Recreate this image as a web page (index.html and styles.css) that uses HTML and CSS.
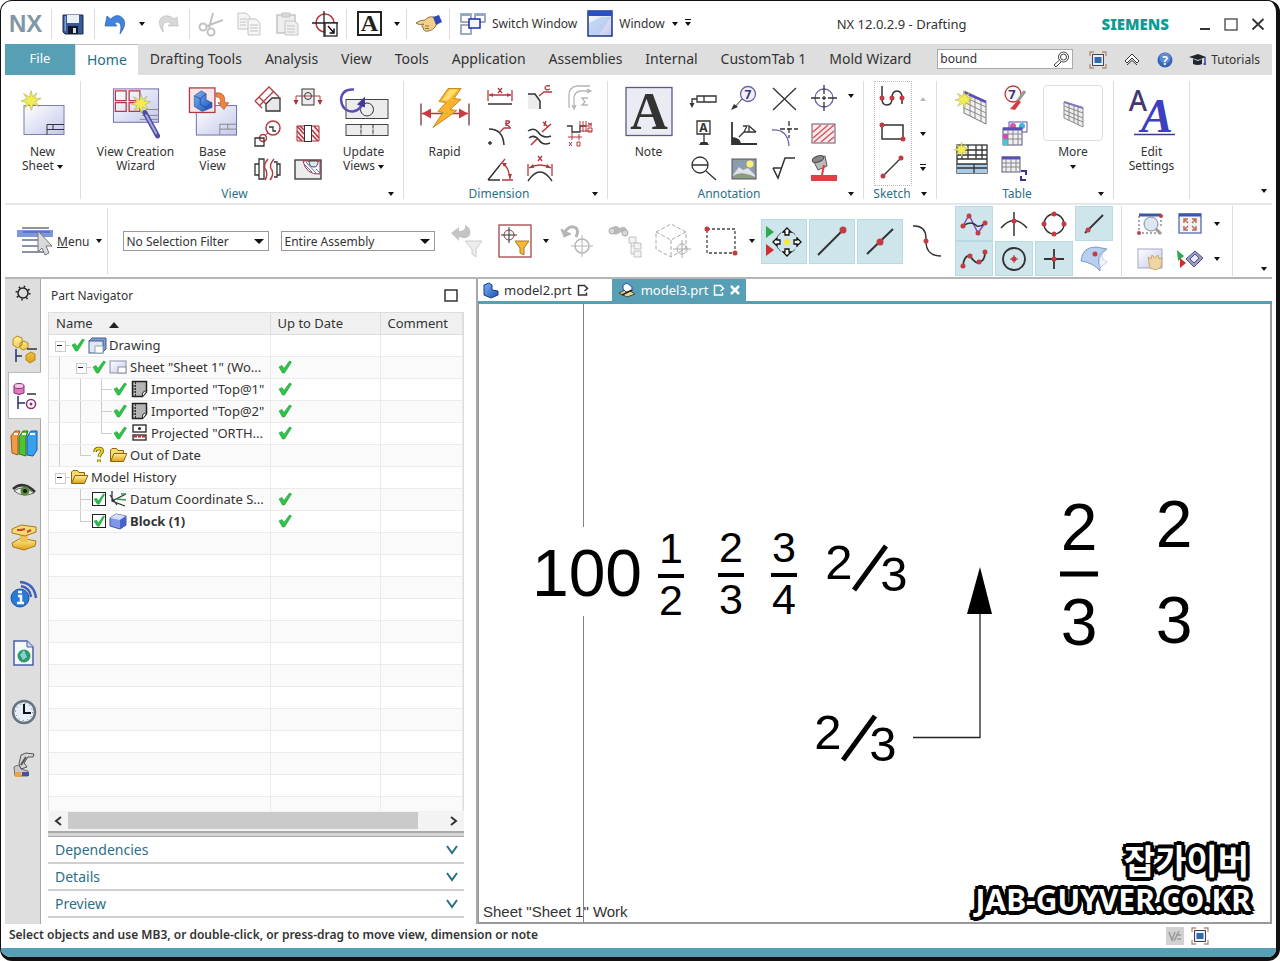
FILE: index.html
```
<!DOCTYPE html>
<html lang="en">
<head>
  <meta charset="UTF-8">
  <meta name="viewport" content="width=device-width, initial-scale=1.0">
  <title>NX 12.0.2.9 - Drafting</title>
  <link rel="stylesheet" href="styles.css">
</head>
<body>
  <!-- Shared symbols -->
  <svg class="defs" width="0" height="0">
    <defs>
      <linearGradient id="paper" x1="0" y1="0" x2="1" y2="1"><stop offset="0" stop-color="#fff"/><stop offset="1" stop-color="#c3c8ea"/></linearGradient>
      <linearGradient id="blue" x1="0" y1="0" x2="1" y2="1"><stop offset="0" stop-color="#7db4f2"/><stop offset="1" stop-color="#1c4fb8"/></linearGradient>
      <linearGradient id="gold" x1="0" y1="0" x2="0" y2="1"><stop offset="0" stop-color="#fff0a0"/><stop offset="1" stop-color="#e0a010"/></linearGradient>
      <symbol id="check" viewBox="0 0 14 14"><path d="M1 7 L4 5.500 L6 8.500 L11.500 1 L13.500 2 L6.500 13 L4.500 13 Z" fill="#2fc447" stroke="#1d9a35" stroke-width=".6"/></symbol>
      <symbol id="star" viewBox="0 0 20 20"><path d="M10 0 L11.500 6 L16 2.500 L13.500 7.500 L20 8 L14.500 11 L18 16 L12 13.500 L10.500 20 L8.500 14 L3 17.500 L6 12 L0 10.500 L6 8 L2.500 3 L8.500 6.500 Z" fill="#f2ee52" stroke="#a9aa60" stroke-width=".6"/></symbol>
      <symbol id="folder" viewBox="0 0 18 16"><path d="M1 14 V3 L2.500 1.500 H7 L8.500 3.500 H14 V6" fill="#f8dc70" stroke="#8a6510"/><path d="M1 14.500 L4.500 6.500 H17.300 L14 14.500 Z" fill="url(#gold)" stroke="#8a6510"/></symbol>
      <symbol id="import" viewBox="0 0 18 18"><path d="M2 1.500 H16 V12 L12 16.500 H2 Z" fill="#b4b4b4" stroke="#222" stroke-width="1.500"/><path d="M5 2 V16 M3.500 5 V13" stroke="#333" stroke-dasharray="2 1"/><path d="M16 11 Q11 11 12 16.500" fill="#fff" stroke="#222"/></symbol>
      <symbol id="note" viewBox="0 0 12 12"><path d="M8 1.500 H1.500 V11 H9.500 V8.500 M7 1 L10.500 4.500 L7.500 7" fill="none" stroke="currentColor" stroke-width="1.500"/></symbol>
      <symbol id="fit" viewBox="0 0 18 18"><path d="M1 5 V1 H5 M13 1 H17 V5 M17 13 V17 H13 M5 17 H1 V13" fill="none" stroke="#b08e70" stroke-width="1.300"/><rect x="3.500" y="3.500" width="11" height="11" fill="#eef" stroke="#445"/><rect x="5.500" y="6" width="7" height="6" fill="#2c6cae"/></symbol>
    </defs>
  </svg>

  <div class="window">
    <!-- Title bar -->
    <header class="titlebar">
      <div class="quick logo">NX</div>
      <div class="quick">
        <button class="tool" aria-label="Save"><svg width="22" height="22" viewBox="0 0 22 22"><path d="M1 2 H21 V21 H3 L1 19 Z" fill="#3b5994" stroke="#1c2b55"/><path d="M5 2 H17 V10 H5 Z" fill="#e9eff7"/><path d="M2.500 3 H4 V18 H2.500 Z" fill="#7fa1d8"/><path d="M6 13 H16 V21 H6 Z" fill="#10182f"/><path d="M11 15 H14 V20 H11 Z" fill="#ddd"/></svg></button>
      </div>
      <div class="quick">
        <button class="tool" aria-label="Undo"><svg width="24" height="24" viewBox="0 0 24 24"><path d="M1 14 L3 4 L6.500 7 Q14 0 19.500 7 Q23 13 16 22 Q18 13 15.500 11 Q13.500 9 10.500 11 L13 14 Z" fill="#4184dc" stroke="#2a5fb4" stroke-width=".7"/></svg></button>
        <button class="drop" aria-label="Undo list"><i class="caret"></i></button>
        <button class="tool" aria-label="Redo"><svg width="24" height="24" viewBox="0 0 24 24"><path d="M22 14 L21 5 L18 7 Q11 1 5 6 Q1 11 7 20 Q6 12 9 10.500 Q12 9 15 11 L12 14 Z" fill="#d8d8d8" stroke="#bbb" stroke-width=".7"/></svg></button>
      </div>
      <div class="quick">
        <button class="tool" aria-label="Cut"><svg width="26" height="26" viewBox="0 0 26 26" fill="none" stroke="#c2c2c2" stroke-width="2"><path d="M15 2 L11 17 M25 9 L9 15"/><circle cx="5" cy="16" r="3.500"/><circle cx="13" cy="21" r="3.500"/></svg></button>
        <button class="tool" aria-label="Copy"><svg width="26" height="26" viewBox="0 0 26 26" fill="#f5f5f5" stroke="#c4c4c4"><path d="M2 2 H10 L14 6 V18 H2 Z"/><path d="M12 8 H20 L24 12 V24 H12 Z"/><path d="M4 8 H11 M4 11 H10 M4 14 H10 M14 14 H22 M14 17 H22 M14 20 H22"/></svg></button>
        <button class="tool" aria-label="Paste"><svg width="26" height="26" viewBox="0 0 26 26" fill="#efefef" stroke="#c4c4c4"><path d="M3 4 H21 V22 H3 Z" stroke-width="1.500"/><path d="M8 2 H16 V6 H8 Z" fill="#d8d8d8"/><path d="M11 10 H20 L24 13 V24 H11 Z"/><path d="M13 15 H21 M13 18 H21 M13 21 H21"/></svg></button>
        <button class="tool" aria-label="Move to point"><svg width="28" height="28" viewBox="0 0 28 28" fill="none"><circle cx="14" cy="13" r="9" stroke="#b5383f" stroke-width="1.500"/><path d="M1 13 H27 M13 1 V27" stroke="#222" stroke-width="1.300"/><rect x="14" y="13" width="12" height="13" fill="#fff" stroke="#222" stroke-width="1.300"/><path d="M17 16 L23 23 M23 18.500 V23 H18.500" stroke="#111" stroke-width="1.500"/></svg></button>
      </div>
      <div class="quick">
        <button class="tool letter" aria-label="Note">A</button>
        <button class="drop" aria-label="Note list"><i class="caret"></i></button>
      </div>
      <div class="quick">
        <button class="tool" aria-label="Repeat command"><svg width="27" height="20" viewBox="0 0 27 20"><path d="M1 9 Q5 6 10 6 Q13 2 19 3 L22 10 Q18 17 13 17 Q8 18 8 13 Q5 13 9 10 Q4 12 1 9 Z" fill="#f3cf8b" stroke="#92713c"/><path d="M10 12 H14 M10 14.500 H14" stroke="#92713c"/><path d="M18 3 L24 1 L27 8 L21 11 Z" fill="#2f48b8"/></svg></button>
      </div>
      <button class="window-cmd"><svg width="26" height="22" viewBox="0 0 26 22"><path d="M1 1 H11 V9 H1 Z M15 1 H25 V9 H15 Z M1 12 H11 V21 H1 Z" fill="#fff" stroke="#8291a5" stroke-width="1.500"/><path d="M1 2 H11 M15 2 H25" stroke="#8fa9c8" stroke-width="2"/><rect x="9" y="6" width="11" height="9" fill="#f3f6ff" stroke="#1b2fa8" stroke-width="1.500"/></svg><span>Switch Window</span></button>
      <button class="window-cmd"><svg width="26" height="27" viewBox="0 0 26 27"><rect x="1" y="1" width="24" height="25" fill="url(#paper)" stroke="#1d3585" stroke-width="1.500"/><path d="M2 25 V13 L14 7 H24 L12 25 Z" fill="#a9c7f3" opacity=".6"/><rect x="1" y="1" width="24" height="5" fill="#2b50c2"/></svg><span>Window</span><i class="caret"></i><i class="caret barred"></i></button>
      <span class="title">NX 12.0.2.9 - Drafting</span>
      <span class="brand">SIEMENS</span>
      <div class="controls">
        <button aria-label="Minimize"><svg width="12" height="14"><path d="M1 12 H11" stroke="#333" stroke-width="2"/></svg></button>
        <button aria-label="Maximize"><svg width="14" height="14"><rect x="1" y="2" width="12" height="11" fill="none" stroke="#444" stroke-width="1.300"/></svg></button>
        <button aria-label="Close"><svg width="14" height="14"><path d="M1.500 2 L12.500 12.500 M12.500 2 L1.500 12.500" stroke="#333" stroke-width="1.800"/></svg></button>
      </div>
    </header>

    <!-- Ribbon tabs -->
    <nav class="tabs">
      <a class="file" href="#">File</a>
      <a class="active" href="#">Home</a>
      <a href="#">Drafting Tools</a>
      <a href="#">Analysis</a>
      <a href="#">View</a>
      <a href="#">Tools</a>
      <a href="#">Application</a>
      <a href="#">Assemblies</a>
      <a href="#">Internal</a>
      <a href="#">CustomTab 1</a>
      <a href="#">Mold Wizard</a>
      <div class="search">
        <input type="text" value="bound" aria-label="Find a command">
        <svg width="17" height="17" viewBox="0 0 17 17" fill="none" stroke="#444"><circle cx="10.500" cy="6" r="5"/><circle cx="10.500" cy="6" r="3"/><path d="M6.500 9 L1 14 L3 16 L8.500 10.500"/></svg>
      </div>
      <div class="tab-tools">
        <button aria-label="Full screen"><svg width="18" height="18"><use href="#fit"/></svg></button>
        <button aria-label="Minimize ribbon"><svg width="16" height="13" viewBox="0 0 16 13"><path d="M1 8 L8 1 L15 8 L13 10 L8 5 L3 10 Z" fill="#fff" stroke="#333"/><path d="M3 12 L8 7.500 L13 12" fill="none" stroke="#333"/></svg></button>
        <button aria-label="Help"><svg width="16" height="16" viewBox="0 0 16 16"><circle cx="8" cy="8" r="7.500" fill="#3566b5"/><circle cx="8" cy="6" r="5.500" fill="#5c8bd2"/><text x="8" y="12.500" class="icon-text white" font-size="12">?</text></svg></button>
      </div>
      <a class="tutorials" href="#"><svg width="18" height="14" viewBox="0 0 18 14"><path d="M0 4 L9 1 L17 4 L9 7 Z M4 6 V11 Q9 13 13 11 V6 L9 8 Z" fill="#22252e"/><path d="M16 4 V12 M14.500 11 H17" stroke="#3446b0" stroke-width="1.500"/></svg>Tutorials</a>
    </nav>

    <!-- Ribbon -->
    <section class="ribbon">
      <div class="group">
        <div class="group-body">
          <button class="big">
            <svg width="46" height="52" viewBox="0 0 46 52"><rect x="4" y="21" width="40" height="29" fill="url(#paper)" stroke="#7d7db0"/><path d="M27 40 H44 M27 45 H44 M27 40 V50 M33 40 V45" class="k"/><use href="#star" x="0" y="6" width="22" height="20"/></svg>
            <span>New<br>Sheet <i class="caret"></i></span>
          </button>
        </div>
      </div>

      <div class="group padded">
        <div class="group-body">
          <button class="big wide">
            <svg width="48" height="54" viewBox="0 0 48 54"><rect x="1" y="5" width="46" height="34" fill="url(#paper)" stroke="#6e6ea8"/><path d="M3 7 H14 V17 H3 Z M17 7 H28 V17 H17 Z M3 19 H14 V28 H3 Z M17 19 H28 V28 H17 Z" class="r" stroke-width="1.300"/><path d="M34 26 H47 M30 32 H47 M28 36 H47" class="n"/><path d="M33 29 L46 53" stroke="#4f4f9c" stroke-width="5" stroke-linecap="round"/><path d="M34 31 L45 51" stroke="#a6a6e8" stroke-width="2"/><use href="#star" x="19" y="10" width="20" height="20"/></svg>
            <span>View Creation<br>Wizard</span>
          </button>
          <button class="big">
            <svg width="50" height="54" viewBox="0 0 50 54"><rect x="8" y="22" width="41" height="30" fill="url(#paper)" stroke="#6e6ea8"/><path d="M32 41 H49 M32 46 H49 M32 41 V52 M40 41 V46" class="n"/><rect x="1" y="4" width="26" height="25" fill="#f6e4e6" stroke="#b5383f" stroke-width="1.300"/><path d="M6 12 L13 7 L18 10 V16 L24 19 V24 L14 28 L6 23 Z" fill="url(#blue)" stroke="#204b98" stroke-width=".6"/><path d="M6 12 L12 15 L18 10 M12 15 V21 L18 24 L24 19 M18 24 V26" fill="none" stroke="#1b4596" stroke-width=".8"/><path d="M28 9 Q38 8 37 19 H41 L36 26 L30 19 H33 Q33 13 28 13 Z" fill="#ef843a" stroke="#a5582a" stroke-width=".7"/></svg>
            <span>Base<br>View</span>
          </button>
          <div class="small-grid two">
            <button aria-label="Projected View"><svg width="28" height="28" viewBox="0 0 28 28"><path d="M1 16 L15 2 L25 12 M1 16 L8 23 M5 12 L12 19 M6 20 L19 7" class="r" stroke-width="1.300"/><path d="M12 19 L18 13 H26 V26 H12 Z" fill="#e8e8ec" stroke="#333" stroke-width="1.300"/></svg></button>
            <button aria-label="Section Line"><svg width="28" height="28" viewBox="0 0 28 28"><rect x="8" y="4" width="12" height="16" fill="#ececec" stroke="#333"/><circle cx="14" cy="11" r="3.500" class="k"/><path d="M2 16 V11 H26 V16" class="r"/><path d="M-.5 15 H4.500 L2 20 Z M23.500 15 H28.500 L26 20 Z" fill="#a4303a"/></svg></button>
            <button aria-label="Detail View"><svg width="28" height="28" viewBox="0 0 28 28"><circle cx="19" cy="8" r="7" class="r" stroke-width="1.500"/><circle cx="9" cy="18" r="3.500" class="r" stroke-width="1.500"/><path d="M11 15.500 L14 13" class="r"/><path d="M1 18 H10 V26 H1 Z M15 7 H19 V11 H22" class="k" stroke-width="1.300"/></svg></button>
            <button aria-label="Section View"><svg width="28" height="28" viewBox="0 0 28 28"><path d="M3 6 H25 V21 H3 Z" fill="#fbeaea" stroke="#a4303a"/><path d="M3 6 L10 14 M3 11 L10 19 M3 16 L8 21 M6 6 L10 10 M18 10 L25 18 M18 15 L24 21 M20 6 L25 12" class="r" stroke-width="1.500"/><rect x="10.500" y="5.500" width="7" height="16" fill="#fff" stroke="#333"/></svg></button>
            <button aria-label="View Break"><svg width="28" height="28" viewBox="0 0 28 28"><path d="M1 9 H5 V20 H1 Z M5 4 H10 V24 H5 Z M20 7 H23 V22 H20 M23 9 H26 V20 H23" class="k" stroke-width="1.300"/><path d="M14 4 Q8 11 12 15 Q14 20 11 25 M20 4 Q14 11 18 15 Q20 20 16 25" class="r" stroke-width="1.500"/></svg></button>
            <button aria-label="Break-out Section"><svg width="28" height="28" viewBox="0 0 28 28"><rect x="1" y="5" width="26" height="19" fill="#ececec" stroke="#333" stroke-width="1.300"/><path d="M9 6 Q12 20 26 19 V6 Z" fill="#fff" stroke="#a4303a"/><path d="M10 9 L18 17 M12 7 L22 18 M22 14 L26 18" stroke="#5b6bb8"/><path d="M15 6 Q15 12 20 12 Q24 12 24 6 Z" fill="#dce6f5" stroke="#444"/></svg></button>
          </div>
          <button class="big">
            <svg width="50" height="52" viewBox="0 0 50 52"><rect x="7" y="15" width="42" height="19" fill="#ececec" stroke="#444"/><rect x="7" y="40" width="42" height="11" fill="#ececec" stroke="#444"/><circle cx="28" cy="25" r="6.500" class="k"/><path d="M22 40 V51 M34 40 V51" class="k" stroke-dasharray="4 1"/><path d="M15 5 Q3 4 2 15 Q3 27 14 27 Q21 26 24 18" fill="none" stroke="#5a50b4" stroke-width="2.500"/><path d="M18 20 L26 12 L26 23 Z" fill="#40379c"/></svg>
            <span>Update<br>Views <i class="caret"></i></span>
          </button>
        </div>
        <div class="group-label">View<button class="launcher" aria-label="View options"><i class="caret"></i></button></div>
      </div>

      <div class="group inset">
        <div class="group-body">
          <button class="big">
            <svg width="50" height="50" viewBox="0 0 50 50"><path d="M1 18 V40 M49 18 V40" stroke="#8a5050" stroke-width="1.500"/><path d="M2 28 H48" stroke="#b5383f" stroke-width="1.300"/><path d="M2 28 L11 23 V33 Z M48 28 L39 23 V33 Z" fill="#c93c42"/><path d="M28 3 H41 L34 13 L41 14 L30 24 L37 25 L13 42 L23 27 L18 26 L26 17 L19 16 Z" fill="#fbb32d" stroke="#c58a22"/><path d="M30 4 H38 L28 15 L22 15 Z" fill="#ffe06e"/></svg>
            <span>Rapid</span>
          </button>
          <div class="small-grid three">
            <button aria-label="Linear"><svg width="28" height="28" viewBox="0 0 28 28"><path d="M2 5 V16 M26 5 V16 M3 10 H25 M12 3 L16 8 M16 3 L12 8" class="r" stroke-width="1.300"/><path d="M3 10 L7 8 V12 Z M25 10 L21 8 V12 Z" fill="#b5383f"/><path d="M2 19 H26" class="k" stroke-width="1.300"/></svg></button>
            <button aria-label="Chamfer"><svg width="28" height="28" viewBox="0 0 28 28"><path d="M2 9 H9 L14 16 V24 H2 Z" fill="#ececec"/><path d="M2 9 H9 L14 16 V24" class="k" stroke-width="1.500"/><path d="M13 11 L18 7 H26 M24 1 Q19 0 19 3 Q20 6 24 4" class="r" stroke-width="1.300"/></svg></button>
            <button aria-label="Thickness" disabled><svg width="28" height="28" viewBox="0 0 28 28" fill="none" stroke="#b5b5b5" stroke-width="1.300"><path d="M3 23 V10 Q3 2 11 1 H24 M8 23 V12 Q9 7 14 6 H24 M21 4 L25 6 L21 8 M6 20 L8 24 L10 20 M22 13 H16 L19 17 L16 20 H22"/></svg></button>
            <button aria-label="Radial"><svg width="28" height="28" viewBox="0 0 28 28"><path d="M3 9 Q17 9 18 25 M2 23 H6 M4 21 V25" class="k" stroke-width="1.500"/><path d="M14 12 L18 8 H25 M20 6 V1 H23 Q25 3 20 4 L24 7" class="r" stroke-width="1.300"/></svg></button>
            <button aria-label="Curve"><svg width="28" height="28" viewBox="0 0 28 28"><path d="M2 11 Q8 7 12 12 Q17 19 25 16 M3 18 Q8 14 13 20 Q17 26 24 23" class="k" stroke-width="1.500"/><path d="M5 25 L11 19 M16 12 L25 4 M17 2 L22 7 M20 1 L18 6" class="r" stroke-width="1.500"/></svg></button>
            <button aria-label="Ordinate"><svg width="28" height="28" viewBox="0 0 28 28"><path d="M1 6 H6 V12 H14 V6 H20" class="k" stroke-width="1.300"/><path d="M14 1 V6 M6 13 V20 M13 14 V20 M2 17 H16 M17 1 V12 M20 1 V12 M15 6 H26 M15 11 H26 M22 3 L26 5 M26 3 L22 5 M3 22 L6 26 M6 22 L3 26 M11 22 H14 V26 H11 Z M22 8 H26 V12 H22 Z" class="r"/></svg></button>
            <button aria-label="Angular"><svg width="28" height="28" viewBox="0 0 28 28"><path d="M2 25 H14 M2 25 L14 10" class="k" stroke-width="1.500"/><path d="M14 10 L19 4 M16 25 H27 M17 8 Q23 13 24 24" class="r" stroke-width="1.300"/><path d="M16 8 L21 8 L18 12 Z M22 19 L26 19 L24 24 Z" fill="#b5383f"/></svg></button>
            <button aria-label="Arc Length"><svg width="28" height="28" viewBox="0 0 28 28"><path d="M2 26 Q14 8 26 26" class="k" stroke-width="1.500"/><path d="M2 9 V21 M26 9 V21 M3 13 Q14 7 25 13 M12 1 L16 6 M16 1 L12 6" class="r" stroke-width="1.300"/><path d="M3 13 L7 9 L8 13 Z M25 13 L21 9 L20 13 Z" fill="#b5383f"/></svg></button>
          </div>
        </div>
        <div class="group-label">Dimension<button class="launcher" aria-label="Dimension options"><i class="caret"></i></button></div>
      </div>

      <div class="group inset">
        <div class="group-body">
          <button class="big">
            <svg width="48" height="50" viewBox="0 0 48 50"><rect x="1" y="2" width="46" height="48" fill="#eaebf3" stroke="#5d5a88" stroke-width="1.300"/><text x="24" y="43" class="serif" font-size="52">A</text></svg>
            <span>Note</span>
          </button>
          <div class="small-grid four">
            <button aria-label="Feature Control Frame"><svg width="28" height="28" viewBox="0 0 28 28"><path d="M7 11 H26 V17 H7 Z M14 11 V17 M7 14 H2 V20" class="k" stroke-width="1.300"/><path d="M-.5 18 H4.500 L2 23 Z" fill="#333"/></svg></button>
            <button aria-label="Balloon"><svg width="28" height="28" viewBox="0 0 28 28"><circle cx="18" cy="9" r="7.500" fill="#f2f1fa" stroke="#6c64a4" stroke-width="1.300"/><path d="M12 14 L4 23" class="k"/><path d="M1 25 L4 19 L8 22 Z" fill="#333"/><text x="18" y="13.500" class="icon-text navy" font-size="12">7</text></svg></button>
            <button aria-label="Center Mark"><svg width="28" height="28" viewBox="0 0 28 28"><path d="M3 3 L26 25 M26 3 L3 25" class="k" stroke-width="1.300"/></svg></button>
            <button aria-label="Target Point"><svg width="28" height="28" viewBox="0 0 28 28"><circle cx="14" cy="13" r="9" fill="none" stroke="#6c64a4" stroke-width="1.300"/><path d="M14 0 V9 M14 17 V26 M1 13 H10 M18 13 H27 M12 13 H16 M14 11 V15" class="k" stroke-width="1.300"/></svg></button>
            <button aria-label="Datum Feature"><svg width="28" height="28" viewBox="0 0 28 28"><path d="M7 1 H20 V14 H7 Z M14 14 V22" class="k" stroke-width="1.300"/><path d="M9 25 L11 22 H17 L19 25 Z" fill="#333"/><text x="13.500" y="12" class="icon-text" font-size="12">A</text></svg></button>
            <button aria-label="Surface Angle"><svg width="28" height="28" viewBox="0 0 28 28"><path d="M2 2 V24 H27" fill="none" stroke="#333" stroke-width="1.800"/><path d="M2 24 V17 Q11 18 11 24 Z" fill="#333"/><path d="M9 17 L14 12 H26 M13 6 H17 L14 12 M19 12 V6 L26 12" class="k" stroke-width="1.300"/></svg></button>
            <button aria-label="Intersection"><svg width="28" height="28" viewBox="0 0 28 28"><path d="M2 10 Q18 9 19 26" fill="none" stroke="#6c64a4" stroke-width="1.300"/><path d="M19 1 V18 M10 9 H28" class="k" stroke-width="1.300" stroke-dasharray="5 2"/></svg></button>
            <button aria-label="Crosshatch"><svg width="28" height="28" viewBox="0 0 28 28"><rect x="2" y="4" width="23" height="19" fill="#fbeaea" stroke="#6b5568"/><path d="M3 12 L11 5 M3 18 L18 5 M4 22 L24 5 M11 22 L24 11 M18 22 L24 17" stroke="#cf5962" stroke-width="1.500"/></svg></button>
            <button aria-label="Zoom"><svg width="28" height="28" viewBox="0 0 28 28"><circle cx="10" cy="10" r="8" class="k" stroke-width="1.300"/><path d="M2 10 H18 M16 16 L26 25" class="k" stroke-width="1.300"/></svg></button>
            <button aria-label="Image"><svg width="28" height="28" viewBox="0 0 28 28"><rect x="2" y="4" width="24" height="20" fill="#8d9cac" stroke="#555"/><circle cx="20" cy="9" r="3.500" fill="#fdf07a"/><path d="M3 20 L9 12 L13 15 L18 13 L25 20 V23 H3 Z" fill="#dde3e8"/><path d="M3 21 Q10 15 25 22 V23 H3 Z" fill="#8b9c7f"/></svg></button>
            <button aria-label="Surface Finish"><svg width="28" height="28" viewBox="0 0 28 28"><path d="M3 13 H12 M3 13 L8 23 L15 3 H25" class="k" stroke-width="1.500"/></svg></button>
            <button aria-label="Area Fill"><svg width="28" height="28" viewBox="0 0 28 28"><path d="M3 5 L15 1 L17 11 L8 15 Z" fill="#bbb" stroke="#555"/><ellipse cx="8" cy="4" rx="6" ry="3" transform="rotate(-20 8 4)" fill="#888" stroke="#444"/><path d="M14 10 L12 20" stroke="#e23b40" stroke-width="2"/><path d="M1 20 H27 V26 H1 Z" fill="#e33f42"/></svg></button>
          </div>
          <button class="drop top" aria-label="Center mark list"><i class="caret"></i></button>
        </div>
        <div class="group-label">Annotation<button class="launcher" aria-label="Annotation options"><i class="caret"></i></button></div>
      </div>

      <div class="group">
        <div class="group-body">
          <div class="gallery">
            <button aria-label="Profile"><svg width="28" height="28" viewBox="0 0 28 28"><path d="M3 1 V14 Q3 20 8 20 Q13 20 13 13 Q13 6 18 6 Q23 6 23 13 V19" class="k" stroke-width="1.500"/><path d="M3 13 h0 M13 13 h0 M23 13 h0" class="dot"/></svg></button>
            <button aria-label="Rectangle"><svg width="28" height="28" viewBox="0 0 28 28"><path d="M3 6 H24 V20 H3 Z" class="k" stroke-width="1.500"/><path d="M3 6 h0 M24 20 h0" class="dot"/></svg></button>
            <button aria-label="Line"><svg width="28" height="28" viewBox="0 0 28 28"><path d="M4 23 L22 5" class="k" stroke-width="1.300"/><path d="M4 23 h0 M22 5 h0" class="dot"/></svg></button>
          </div>
          <div class="scroller">
            <button aria-label="Scroll up"><i class="caret up"></i></button>
            <button aria-label="Scroll down"><i class="caret"></i></button>
            <button aria-label="Sketch gallery"><i class="caret barred"></i></button>
          </div>
        </div>
        <div class="group-label">Sketch<button class="launcher" aria-label="Sketch options"><i class="caret"></i></button></div>
      </div>

      <div class="group">
        <div class="group-body">
          <div class="pair">
            <button aria-label="Tabular Note"><svg width="34" height="38" viewBox="0 0 34 38"><path d="M10 5 L32 15 V37 L10 26 Z" fill="#f2f2f4" stroke="#777"/><path d="M10 10 L32 20 M10 15 L32 26 M10 21 L32 31 M16 8 V29 M21 10 V32 M27 13 V34" class="n"/><path d="M10 5 L32 15" stroke="#5a50b4" stroke-width="2.500"/><use href="#star" x="1" y="3" width="18" height="19"/></svg></button>
            <button aria-label="Parts List"><svg width="34" height="34" viewBox="0 0 34 34"><rect x="3" y="4" width="30" height="28" fill="#fff" stroke="#333" stroke-width="1.300"/><rect x="3" y="23" width="30" height="9" fill="#a8cbe8"/><path d="M3 9 H33 M3 14 H33 M3 18 H33 M3 23 H33 M3 27 H33 M8 18 V4 M14 18 V4 M22 18 V4 M28 18 V4 M20 23 V32" class="k" stroke-width="1.300"/><use href="#star" x="0" y="1" width="15" height="15"/></svg></button>
          </div>
          <div class="small-grid one">
            <button aria-label="Auto Balloon"><svg width="28" height="28" viewBox="0 0 28 28"><circle cx="12" cy="9" r="8" fill="#fdf6f6" stroke="#b5383f" stroke-width="1.300"/><text x="11" y="14" class="icon-text navy" font-size="13">7</text><path d="M24 6 L16 17" stroke="#999" stroke-width="3"/><path d="M17 15 L9 24 L14 25 L20 17 Z" fill="#d43e43"/></svg></button>
            <button aria-label="Edit Text"><svg width="28" height="28" viewBox="0 0 28 28"><rect x="8" y="2" width="18" height="10" fill="#fff" stroke="#5a50b4"/><circle cx="12" cy="6" r="3" fill="#d557a5"/><circle cx="21" cy="6" r="3" fill="#3fb4df"/><rect x="2" y="8" width="19" height="17" fill="#f0f0f4" stroke="#5a5a78"/><rect x="2" y="14" width="5" height="5" fill="#e23fc0"/><rect x="2" y="19" width="5" height="6" fill="#43c7df"/><path d="M2 9 H21" stroke="#5a50b4" stroke-width="3"/><path d="M2 14 H21 M2 19 H21 M7 10 V25 M12 10 V25 M17 10 V25" class="n"/></svg></button>
            <button aria-label="Export"><svg width="28" height="28" viewBox="0 0 28 28"><rect x="1" y="2" width="18" height="15" fill="#f0f0f4" stroke="#5a5a78"/><path d="M1 3 H19" stroke="#5a50b4" stroke-width="3"/><path d="M1 8 H19 M1 12 H19 M5 4 V17 M10 4 V17 M15 4 V17" class="n"/><path d="M20 16 H25 V20 M25 25 H20 V21" fill="none" stroke="#3c3390" stroke-width="2"/></svg></button>
          </div>
          <button class="big more">
            <svg width="34" height="34" viewBox="0 0 34 34"><path d="M8 6 L27 12 V31 L8 22 Z" fill="#eee" stroke="#888"/><path d="M8 10 L27 17 M8 14 L27 22 M8 18 L27 26 M13 8 V24 M18 9 V27 M22 10 V29" class="n"/><path d="M8 6 L27 12" stroke="#7f78c0" stroke-width="2"/></svg>
            <span>More<br><i class="caret"></i></span>
          </button>
        </div>
        <div class="group-label">Table<button class="launcher" aria-label="Table options"><i class="caret"></i></button></div>
      </div>

      <div class="group">
        <div class="group-body">
          <button class="big">
            <svg width="50" height="50" viewBox="0 0 50 50"><text x="11" y="25" class="icon-text purple" font-size="28">A</text><text x="30" y="46" class="serif blue" font-size="48">A</text><path d="M7 49 H48" stroke="#3a3a86" stroke-width="1.500"/></svg>
            <span>Edit<br>Settings</span>
          </button>
        </div>
      </div>
      <button class="launcher last" aria-label="Ribbon options"><i class="caret"></i></button>
    </section>

    <!-- Selection bar -->
    <section class="selection-bar">
      <button class="menu"><svg width="36" height="32" viewBox="0 0 36 32"><path d="M5 3 H32 M5 15 H28 M5 21 H24 M5 27 H30" stroke="#8c93a5" stroke-width="2"/><path d="M0 5 H36 V12 H0 Z" fill="#8096da"/><path d="M6 7 H33" stroke="#5d76c4" stroke-width="2"/><path d="M21 6 V27 L25 23 L28 30 L32 28 L29 21 H35 Z" fill="#d9dade" stroke="#777"/></svg><span><u>M</u>enu</span><i class="caret"></i></button>
      <div class="combo"><select aria-label="Selection filter"><option>No Selection Filter</option></select><i class="caret large"></i></div>
      <div class="combo"><select aria-label="Selection scope"><option>Entire Assembly</option></select><i class="caret large"></i></div>

      <div class="select-tools">
        <button aria-label="Reset filters" disabled><svg width="34" height="36" viewBox="0 0 34 36"><path d="M1 10 L9 4 V8 Q16 8 15 2 Q22 5 20 12 Q17 17 9 14 V18 Z" fill="#c4c4c4"/><path d="M15 18 H32 L26 26 V34 L22 31 V26 Z" fill="#ededed" stroke="#ccc"/></svg></button>
        <button aria-label="General filters"><svg width="34" height="34" viewBox="0 0 34 34"><rect x="1" y="1" width="32" height="32" fill="#fff" stroke="#a0454c" stroke-width="1.300"/><circle cx="11" cy="11" r="5" fill="none" stroke="#9a3b42"/><path d="M3 11 H19 M11 3 V19" class="k"/><path d="M17 17 H31 L26 24 V31 L22 29 V24 Z" fill="#f5b83a" stroke="#a87c25"/></svg></button>
        <button class="drop" aria-label="Filter list"><i class="caret"></i></button>
        <button aria-label="Undo point" disabled><svg width="34" height="36" viewBox="0 0 34 36" fill="none" stroke="#b5b5b5"><path d="M4 10 Q10 1 16 5 Q19 8 16 14" stroke-width="3"/><path d="M1 6 L4 14 L11 11 Z" fill="#b5b5b5"/><circle cx="22" cy="23" r="7" stroke-width="1.500"/><path d="M11 23 H33 M22 12 V34"/></svg></button>
        <button aria-label="Find in navigator" disabled><svg width="34" height="36" viewBox="0 0 34 36"><path d="M1 8 Q6 0 12 5 Q17 1 20 9 L17 13 L13 9 Q7 14 5 10 Z" fill="#bbb"/><circle cx="4" cy="8" r="3" fill="#d8d8d8" stroke="#aaa"/><circle cx="17" cy="10" r="3" fill="#d8d8d8" stroke="#aaa"/><path d="M21 14 H28 V20 H21 Z M26 20 H33 V26 H26 Z M26 28 H33 V34 H26 Z M23 20 V31 H26 M23 23 H26" fill="#f2f2f2" stroke="#c2c2c2"/></svg></button>
        <button aria-label="Point cloud" disabled><svg width="36" height="38" viewBox="0 0 36 38" fill="none" stroke="#aaa"><path d="M1 10 L16 2 L31 10 V26 L16 35 L1 27 Z M1 10 L16 18 L31 10 M16 18 V35" stroke-dasharray="4 2"/><circle cx="27" cy="27" r="5"/><path d="M18 27 H36 M27 18 V36"/></svg></button>
        <button aria-label="Rectangle select"><svg width="34" height="30" viewBox="0 0 34 30"><rect x="3" y="3" width="28" height="24" fill="none" stroke="#444" stroke-width="1.300" stroke-dasharray="3 2"/><path d="M3 3 h0 M31 27 h0" class="dot"/></svg></button>
        <button class="drop" aria-label="Select list"><i class="caret"></i></button>
        <button class="on" aria-label="Move"><svg width="38" height="32" viewBox="0 0 38 32"><path d="M1 1 L9 7 L1 13 Z" fill="#2ba94c"/><path d="M1 19 L9 25 L1 31 Z" fill="#d32c31"/><circle cx="22" cy="17" r="11" fill="none" stroke="#4a5560" stroke-dasharray="5 3"/><circle cx="22" cy="17" r="3" fill="#f8e733"/><path d="M22 3 L26 7 H24 V10 H20 V7 H18 Z M22 31 L26 27 H24 V24 H20 V27 H18 Z M8 17 L12 13 V15 H15 V19 H12 V21 Z M36 17 L32 13 V15 H29 V19 H32 V21 Z" fill="#fff" stroke="#111" stroke-width="1.300"/></svg></button>
        <button class="on" aria-label="End point"><svg width="32" height="32" viewBox="0 0 32 32"><path d="M2 30 L27 5" class="k" stroke-width="2"/><path d="M27 5 h0" class="dot big-dot"/></svg></button>
        <button class="on" aria-label="Mid point"><svg width="32" height="32" viewBox="0 0 32 32"><path d="M3 29 L29 4" class="k" stroke-width="2"/><path d="M16 17 h0" class="dot big-dot"/></svg></button>
        <button aria-label="Control point"><svg width="32" height="34" viewBox="0 0 32 34"><path d="M2 2 Q14 1 15 13 V19 Q16 32 30 32" class="k" stroke-width="1.500"/><path d="M15 17 h0" class="dot"/></svg></button>
      </div>

      <div class="snap-grid">
        <button class="on" aria-label="Control pole"><svg width="26" height="24" viewBox="0 0 26 24"><path d="M2 14 L8 3 L17 21 L24 11" fill="none" stroke="#8a45c5" stroke-width="1.500"/><path d="M2 14 Q10 8 16 14 Q20 15 24 11" class="k" stroke-width="1.500"/><path d="M2 14 h0 M8 4 h0 M17 21 h0 M24 11 h0" class="dot"/></svg></button>
        <button aria-label="Intersection point"><svg width="28" height="26" viewBox="0 0 28 26"><path d="M14 1 V25 M1 17 Q14 2 27 17" class="k" stroke-width="1.500"/><path d="M14 10 h0" class="dot"/></svg></button>
        <button aria-label="Quadrant point"><svg width="26" height="26" viewBox="0 0 26 26"><circle cx="13" cy="13" r="10" class="k" stroke-width="1.500"/><path d="M13 3 h0 M13 23 h0 M3 13 h0 M23 13 h0" class="dot"/></svg></button>
        <button class="on" aria-label="Existing point"><svg width="26" height="26" viewBox="0 0 26 26"><path d="M4 22 L22 4" class="k" stroke-width="1.800"/><path d="M7 19 h0" class="dot"/></svg></button>
        <button class="on" aria-label="Point on spline"><svg width="28" height="24" viewBox="0 0 28 24"><path d="M3 19 Q4 8 10 9 Q16 18 20 15 Q25 13 25 5" class="k" stroke-width="1.800"/><path d="M3 19 h0 M10 9 h0 M19 15 h0 M25 5 h0" class="dot"/></svg></button>
        <button class="on" aria-label="Arc center"><svg width="26" height="26" viewBox="0 0 26 26"><circle cx="13" cy="13" r="11" class="k" stroke-width="1.800"/><path d="M13 9 V17 M9 13 H17" class="r"/><path d="M13 13 h0" class="dot"/></svg></button>
        <button class="on" aria-label="Point"><svg width="26" height="26" viewBox="0 0 26 26"><path d="M13 3 V23 M3 13 H23" class="k" stroke-width="1.800"/><path d="M13 13 h0" class="dot"/></svg></button>
        <button aria-label="Point on face"><svg width="28" height="26" viewBox="0 0 28 26"><path d="M1 15 Q2 1 16 1 L27 3 Q15 8 20 22 L20 25 Q14 17 1 15 Z" fill="#b8d0f0" stroke="#7d9ac5"/><path d="M26 4 Q17 10 20 22 L27 16 Q22 14 22 10 Q22 6 26 4 Z" fill="#eef4fc" stroke="#a8bcd8" stroke-width=".7"/><path d="M15 8 h0" class="dot"/></svg></button>
      </div>

      <div class="view-grid">
        <button aria-label="Zoom window"><svg width="26" height="24" viewBox="0 0 26 24"><path d="M2 3 H24" stroke="#3b55a8" stroke-width="3"/><path d="M2 4 V21 H22 M24 4 V16" fill="none" stroke="#555" stroke-dasharray="2 2"/><circle cx="14" cy="12" r="7" fill="#dbe8f2" stroke="#889"/><path d="M19 17 L24 22" stroke="#999" stroke-width="3"/><path d="M24 4 h0 M2 21 h0" class="dot small-dot"/></svg></button>
        <button aria-label="Fit view"><svg width="26" height="24" viewBox="0 0 26 24"><rect x="2" y="2" width="22" height="19" fill="#f2f4fc" stroke="#6a7cba" stroke-width="1.500"/><path d="M2 3 H24" stroke="#3b55a8" stroke-width="3"/><path d="M7 11 V7 H11 M15 7 H19 V11 M19 14 V18 H15 M11 18 H7 V14 M8 8 L11 11 M18 8 L15 11 M8 17 L11 14 M18 17 L15 14" fill="none" stroke="#c26b52" stroke-width="1.500"/></svg></button>
        <button class="drop" aria-label="Fit list"><i class="caret"></i></button>
        <button aria-label="Pan view"><svg width="26" height="24" viewBox="0 0 26 24"><rect x="1" y="2" width="24" height="19" fill="url(#paper)" stroke="#a3a7c4"/><path d="M12 15 L11 10 L14 12 L15 8 L18 11 L21 8 L22 12 L25 11 L24 20 L19 23 L13 21 Z" fill="#f0d6a4" stroke="#c7a76b"/></svg></button>
        <button aria-label="Orient view"><svg width="26" height="22" viewBox="0 0 26 22"><path d="M0 2 L7 8 L1 13 Z" fill="#2ba94c"/><path d="M3 10 L9 15 L3 20 Z" fill="#d32c31"/><path d="M9 11 L18 3 L26 10 L17 19 Z" fill="#9a9ac4" stroke="#50508a"/><path d="M13 11 L18 6 L22 10 L17 15 Z" fill="#e8e8f8" stroke="#50508a"/></svg></button>
        <button class="drop" aria-label="Orient list"><i class="caret"></i></button>
      </div>
      <button class="launcher last" aria-label="Toolbar options"><i class="caret"></i></button>
    </section>

    <main class="workspace">
      <!-- Resource bar -->
      <aside class="resource-bar">
        <button class="gear" aria-label="Options"><svg width="18" height="18" viewBox="0 0 18 18" fill="none" stroke="#222"><circle cx="9" cy="9" r="5" stroke-width="1.500"/><circle cx="9" cy="9" r="6.500" stroke-width="2" stroke-dasharray="1.500 3.600"/></svg></button>
        <button aria-label="Assembly Navigator"><svg width="26" height="28" viewBox="0 0 26 28"><path d="M2 4 L6 1 L11 3 V10 L6 13 L2 10 Z M9 8 L13 6 L17 8 V13 L12 15 L9 13 Z M15 20 L20 17 L24 19 V25 L19 28 L15 25 Z" fill="url(#gold)" stroke="#b58a16"/><path d="M5 14 V27 M5 21 H11" stroke="#26306c" stroke-width="1.500" fill="none"/><path d="M16 14 H26" stroke="#333" stroke-width="1.500"/></svg></button>
        <button class="active" aria-label="Part Navigator"><svg width="26" height="28" viewBox="0 0 26 28"><path d="M2 4 V11 Q7 14 12 11 V4 Z" fill="#dc7ac0" stroke="#8c2f72"/><ellipse cx="7" cy="4" rx="5" ry="2.500" fill="#f6c6e6" stroke="#8c2f72"/><path d="M6 14 V27 M6 21 H13" stroke="#26306c" stroke-width="1.500" fill="none"/><path d="M15 12 H24" stroke="#333" stroke-width="1.500"/><circle cx="19" cy="22" r="4.500" fill="#fff" stroke="#8c2f72" stroke-width="1.500"/><circle cx="19" cy="22" r="1.500" fill="#8c2f72"/></svg></button>
        <button aria-label="Reuse Library"><svg width="28" height="28" viewBox="0 0 28 28"><path d="M1 7 L5 2 H10 L8 7 V26 L2 24 Z" fill="#f2994a" stroke="#a35d1d"/><path d="M9 8 L13 2 H18 L16 8 V27 L9 25 Z" fill="#52c234" stroke="#2b7d1a"/><path d="M17 8 L21 2 H27 V21 L23 27 L17 26 Z" fill="#38a0ec" stroke="#1c5a9c"/><path d="M4 5 H8 M12 5 H16 M20 5 H25" stroke="#fff" stroke-width="2"/></svg></button>
        <button aria-label="View Manager"><svg width="24" height="18" viewBox="0 0 24 18"><path d="M1 8 Q11 -1 23 11" fill="none" stroke="#333" stroke-width="2.500"/><path d="M2 10 Q11 3 22 12 Q11 17 2 10 Z" fill="#e9efe5" stroke="#666"/><circle cx="13" cy="10" r="4.500" fill="#58883e"/><circle cx="13" cy="10" r="2" fill="#111"/></svg></button>
        <button aria-label="Process Studio"><svg width="26" height="28" viewBox="0 0 26 28"><path d="M1 20 L10 15 L25 18 L24 23 L13 27 L2 24 Z" fill="url(#gold)" stroke="#a8791c"/><path d="M9 9 H17 V19 H9 Z" fill="#efc254"/><path d="M1 6 L10 2 L25 4 V9 L14 13 L1 10 Z" fill="#f8da74" stroke="#a8791c"/><path d="M6 7 H10 L14 6 M16 9 L20 7" stroke="#c7452b" stroke-width="2"/></svg></button>
        <div class="resource-web">
          <button aria-label="Internet"><svg width="28" height="28" viewBox="0 0 28 28"><circle cx="10" cy="18" r="9" fill="#2a7ad6" stroke="#1a529c"/><path d="M8 12 H12 M8 16 H11 V23 M7 23 H14" stroke="#fff" stroke-width="2.500" fill="none"/><path d="M10 2 Q24 3 26 18 M11 6 Q20 8 21 17" stroke="#4162b8" stroke-width="2.500" fill="none"/></svg></button>
          <button aria-label="Browser"><svg width="22" height="26" viewBox="0 0 22 26"><path d="M1 1 H14 L20 7 V25 H1 Z" fill="#f4f8ff" stroke="#4a5fa8" stroke-width="1.500"/><path d="M14 1 V7 H20" fill="#c8d5ee" stroke="#4a5fa8"/><circle cx="11" cy="16" r="6.500" fill="#2f9a63"/><path d="M11 10 L14 17 L10 20 L7 15 Z" fill="#86d0dc"/></svg></button>
          <button aria-label="History"><svg width="26" height="26" viewBox="0 0 26 26"><circle cx="13" cy="13" r="11" fill="#e6f0fb" stroke="#68737e" stroke-width="2.500"/><circle cx="13" cy="13" r="8.500" fill="none" stroke="#667" stroke-dasharray="1 3.500"/><path d="M13 5 V14 H20" stroke="#111" stroke-width="2" fill="none"/></svg></button>
        </div>
        <button aria-label="Roles"><svg width="24" height="26" viewBox="0 0 24 26"><path d="M9 3 L14 1 L22 2 L21 5 L16 5 L12 11 L15 15 L9 17 L7 12 Z" fill="#d5d5d8" stroke="#555"/><path d="M14 5 L9 13" stroke="#555" stroke-width="2"/><path d="M2 15 Q7 11 9 17 L16 19 V24 H3 Z" fill="#c9c9cc" stroke="#444" stroke-width=".7"/><path d="M3 20 H9 V25 H3 Z" fill="#f2a33a"/><path d="M10 20 H17 V24 H10 Z" fill="#4a52a0"/></svg></button>
      </aside>

      <!-- Part Navigator -->
      <section class="navigator">
        <div class="nav-title"><h1>Part Navigator</h1><button aria-label="Pin"><svg width="14" height="13"><rect x="1" y="1" width="12" height="11" fill="none" stroke="#333" stroke-width="1.500"/></svg></button></div>
        <div class="nav-box">
          <table class="tree">
            <thead>
              <tr><th class="col-name">Name <i class="sort"></i></th><th class="col-date">Up to Date</th><th>Comment</th></tr>
            </thead>
            <tbody>
              <tr><td><div class="node"><i class="box"></i><svg width="16" height="14"><use href="#check"/></svg><svg width="19" height="17" viewBox="0 0 19 17"><path d="M1 4 L4 1 H18 V12 L15 15" fill="#7f9bd0" stroke="#445a90"/><rect x="1" y="4" width="14" height="12" fill="#dfe7f5" stroke="#445a90"/><path d="M7 9 H15 V16 H7 Z" fill="#fff" stroke="#8aa"/></svg>Drawing</div></td><td></td><td></td></tr>
              <tr><td><div class="node"><i class="line"></i><i class="box"></i><svg width="16" height="14"><use href="#check"/></svg><svg width="19" height="15" viewBox="0 0 19 15"><rect x="1" y="1" width="16" height="12" fill="url(#paper)" stroke="#8a8fa8"/><rect x="9" y="7" width="8" height="6" fill="#fff" stroke="#8a8fa8"/></svg>Sheet "Sheet 1" (Wo...</div></td><td><svg width="14" height="14"><use href="#check"/></svg></td><td></td></tr>
              <tr><td><div class="node"><i class="line"></i><i class="line"></i><i class="tee"></i><svg width="16" height="14"><use href="#check"/></svg><svg width="19" height="18"><use href="#import"/></svg>Imported "Top@1"</div></td><td><svg width="14" height="14"><use href="#check"/></svg></td><td></td></tr>
              <tr><td><div class="node"><i class="line"></i><i class="line"></i><i class="tee"></i><svg width="16" height="14"><use href="#check"/></svg><svg width="19" height="18"><use href="#import"/></svg>Imported "Top@2"</div></td><td><svg width="14" height="14"><use href="#check"/></svg></td><td></td></tr>
              <tr><td><div class="node"><i class="line"></i><i class="line"></i><i class="elbow"></i><svg width="16" height="14"><use href="#check"/></svg><svg width="19" height="18" viewBox="0 0 19 18"><rect x="3" y="1" width="13" height="7" fill="#fff" stroke="#222" stroke-width="1.300"/><circle cx="9.500" cy="4.500" r="1.500" fill="#222"/><rect x="3" y="11" width="13" height="5" fill="#fff" stroke="#222" stroke-width="1.300"/><path d="M4 12.500 H15" stroke="#c0282d" stroke-width="2" stroke-dasharray="3 1"/></svg>Projected "ORTH...</div></td><td><svg width="14" height="14"><use href="#check"/></svg></td><td></td></tr>
              <tr><td><div class="node"><i class="line"></i><i class="elbow"></i><svg width="16" height="16" viewBox="0 0 16 16"><path d="M4 5 Q4 1.500 8 1.500 Q12 1.500 11 5 Q9 7 8 10 M8 12.500 V15" fill="none" stroke="#6e5c08" stroke-width="3.500"/><path d="M4 5 Q4 1.500 8 1.500 Q12 1.500 11 5 Q9 7 8 10 M8 12.500 V15" fill="none" stroke="#f0da20" stroke-width="1.800"/></svg><svg width="19" height="16"><use href="#folder"/></svg>Out of Date</div></td><td></td><td></td></tr>
              <tr><td><div class="node"><i class="box"></i><svg width="19" height="16"><use href="#folder"/></svg>Model History</div></td><td></td><td></td></tr>
              <tr><td><label class="node"><i></i><i class="tee"></i><input type="checkbox" checked><svg width="19" height="18" viewBox="0 0 19 18"><path d="M3 1 V11 L16 16 M3 11 L17 4 M1 5 L8 15" fill="none" stroke="#333" stroke-width="1.300"/><path d="M8 9 L17 10 M12 4 L17 4" stroke="#2a9c4a" stroke-width="1.500"/></svg>Datum Coordinate S...</label></td><td><svg width="14" height="14"><use href="#check"/></svg></td><td></td></tr>
              <tr><td><label class="node current"><i></i><i class="elbow"></i><input type="checkbox" checked><svg width="19" height="17" viewBox="0 0 19 17"><path d="M1 5 L7 1 L17 3 V12 L11 16 L1 13 Z" fill="#7f97ea" stroke="#4053a0"/><path d="M1 5 L7 1 L17 3 L11 7 Z" fill="#d3ddff"/><path d="M11 7 V16 L17 12 V3 Z" fill="#4a63c8"/></svg>Block (1)</label></td><td><svg width="14" height="14"><use href="#check"/></svg></td><td></td></tr>
              <tr><td></td><td></td><td></td></tr>
              <tr><td></td><td></td><td></td></tr>
              <tr><td></td><td></td><td></td></tr>
              <tr><td></td><td></td><td></td></tr>
              <tr><td></td><td></td><td></td></tr>
              <tr><td></td><td></td><td></td></tr>
              <tr><td></td><td></td><td></td></tr>
              <tr><td></td><td></td><td></td></tr>
              <tr><td></td><td></td><td></td></tr>
              <tr><td></td><td></td><td></td></tr>
              <tr><td></td><td></td><td></td></tr>
              <tr><td></td><td></td><td></td></tr>
              <tr><td></td><td></td><td></td></tr>
            </tbody>
          </table>
        </div>
        <div class="scrollbar">
          <button aria-label="Scroll left"><svg width="8" height="10"><path d="M7 1 L2 5 L7 9" fill="none" stroke="#333" stroke-width="2"/></svg></button>
          <div class="track"><div class="thumb"></div></div>
          <button aria-label="Scroll right"><svg width="8" height="10"><path d="M1 1 L6 5 L1 9" fill="none" stroke="#333" stroke-width="2"/></svg></button>
        </div>
        <div class="splitter"></div>
        <button class="section">Dependencies<svg width="12" height="10"><path d="M1 1 L6 8 L11 1" fill="none" stroke="#2b6f86" stroke-width="2"/></svg></button>
        <button class="section">Details<svg width="12" height="10"><path d="M1 1 L6 8 L11 1" fill="none" stroke="#2b6f86" stroke-width="2"/></svg></button>
        <button class="section">Preview<svg width="12" height="10"><path d="M1 1 L6 8 L11 1" fill="none" stroke="#2b6f86" stroke-width="2"/></svg></button>
      </section>

      <!-- Drawing sheet -->
      <section class="sheet">
        <div class="doc-tabs">
          <a href="#"><svg width="16" height="16" viewBox="0 0 16 16"><path d="M1 3 L6 1 L9 3 V8 L15 9 V13 L8 16 L1 13 Z" fill="url(#blue)" stroke="#163a88"/></svg>model2.prt<svg width="12" height="12"><use href="#note"/></svg></a>
          <a class="active" href="#"><svg width="18" height="16" viewBox="0 0 18 16"><path d="M1 11 L9 7 L17 12 L9 15 Z" fill="#e8d98a" stroke="#444"/><path d="M5 3 L9 1 L14 5 V9 L8 10 L5 7 Z" fill="#fff" stroke="#234a9c"/><path d="M4 13 L14 8" stroke="#222" stroke-width="1.500"/></svg>model3.prt<svg width="12" height="12"><use href="#note"/></svg><svg width="10" height="10"><path d="M1 1 L9 9 M9 1 L1 9" stroke="#fff" stroke-width="2.500"/></svg></a>
        </div>
        <div class="canvas">
          <svg class="drawing" width="100%" height="100%">
            <path d="M104.500 0 V223 M104.500 312 V2000" stroke="#808080" fill="none"/>
            <text x="108" y="292" text-anchor="middle" font-size="66">100</text>
            <g font-size="43" text-anchor="middle">
              <text x="192" y="259">1</text><text x="192" y="311">2</text>
              <text x="252" y="258">2</text><text x="252" y="310">3</text>
              <text x="305" y="258">3</text><text x="305" y="310">4</text>
            </g>
            <path d="M179 272 H205 M239 271 H265 M292 271 H318" stroke="#000" stroke-width="4"/>
            <g font-size="49" text-anchor="middle">
              <text x="360" y="275">2</text><text x="415" y="287">3</text>
              <text x="349" y="445">2</text><text x="404" y="457">3</text>
            </g>
            <path d="M375 286 L407 242 M364 456 L396 412" stroke="#000" stroke-width="5"/>
            <g font-size="66" text-anchor="middle">
              <text x="600" y="246">2</text><text x="600" y="341">3</text>
              <text x="695" y="243">2</text><text x="695" y="339">3</text>
            </g>
            <path d="M581 270 H619" stroke="#000" stroke-width="5"/>
            <path d="M434 433.500 H501 V309" stroke="#222" fill="none" stroke-width="1.300"/>
            <path d="M501 263 L488 310 H513 Z" fill="#000"/>
          </svg>
          <span class="sheet-name">Sheet "Sheet 1" Work</span>
          <div class="watermark"><span lang="ko">잡가이버</span><span>JAB-GUYVER.CO.KR</span></div>
        </div>
      </section>
    </main>

    <footer class="status">
      <span>Select objects and use MB3, or double-click, or press-drag to move view, dimension or note</span>
      <button aria-label="Work in progress" disabled><svg width="18" height="18" viewBox="0 0 18 18"><rect width="18" height="18" fill="#d2d2d2"/><path d="M3 5 L6 13 L9 5 M8 14 L13 4 M10 8 H15 M11 12 H15" stroke="#999" fill="none" stroke-width="1.500"/></svg></button>
      <button aria-label="Full screen"><svg width="18" height="18"><use href="#fit"/></svg></button>
    </footer>
  </div>
</body>
</html>
```

FILE: styles.css
```
* {
  margin: 0;
  padding: 0;
  box-sizing: border-box;
}

body {
  font-family: "Noto Sans", "Noto Sans CJK KR", sans-serif;
  font-size: 12px;
  color: #333;
  background: #fff;
  height: 100vh;
}

button {
  font: inherit;
  color: inherit;
  background: none;
  border: none;
  display: flex;
  align-items: center;
  justify-content: center;
}

a {
  color: inherit;
  text-decoration: none;
}

svg {
  flex: none;
  display: block;
  overflow: visible;
}

.defs {
  position: absolute;
}

/* Window frame */
.window {
  display: flex;
  flex-direction: column;
  height: 100vh;
  overflow: hidden;
  background: #fff;
  border: 1px solid #111;
  border-right-width: 4px;
  border-bottom-width: 4px;
  border-radius: 12px;
}

/* Icon strokes */
.k {
  fill: none;
  stroke: #333;
}

.r {
  fill: none;
  stroke: #b5383f;
}

.n {
  fill: none;
  stroke: #888;
}

.dot {
  stroke: #c23c42;
  stroke-width: 5;
  stroke-linecap: round;
}

.big-dot {
  stroke-width: 7;
}

.small-dot {
  stroke-width: 4;
}

.icon-text {
  font-family: "Noto Sans", sans-serif;
  font-weight: bold;
  text-anchor: middle;
  fill: #333;
}

.icon-text.white {
  fill: #fff;
}

.icon-text.navy {
  fill: #37387a;
}

.icon-text.purple {
  font-weight: 500;
  fill: #44366f;
}

.serif {
  font-family: "Liberation Serif", serif;
  font-weight: bold;
  text-anchor: middle;
  fill: #333;
}

.serif.blue {
  font-style: italic;
  fill: #3b3fc0;
}

.caret {
  display: inline-block;
  border: 3px solid transparent;
  border-top: 4px solid #111;
  border-bottom: none;
  vertical-align: middle;
}

.caret.large {
  border-width: 5px 5px 0;
}

.caret.up {
  border-top: none;
  border-bottom: 4px solid #bbb;
}

.caret.barred {
  box-shadow: 0 -2px #fff, 0 -3px #111;
}

/* Title bar */
.titlebar {
  display: flex;
  align-items: center;
  height: 43px;
  padding: 2px 6px 0 4px;
  flex: none;
}

.quick {
  display: flex;
  align-items: center;
  height: 30px;
  padding: 0 2px;
  border-right: 1px solid #ddd;
}

.logo {
  width: 47px;
  padding-left: 4px;
  font-family: "Liberation Sans", sans-serif;
  font-size: 24px;
  font-weight: bold;
  color: #8297a5;
}

.tool {
  width: 38px;
  height: 30px;
}

.letter {
  width: 25px;
  height: 25px;
  margin: 0 8px;
  border: 2px solid #222;
  font-family: "Liberation Serif", serif;
  font-size: 24px;
  font-weight: bold;
  line-height: 21px;
  color: #222;
}

.drop {
  width: 14px;
}

.window-cmd {
  gap: 6px;
  padding-left: 10px;
}

.window-cmd .caret {
  margin-left: 1px;
}

.title {
  margin-left: auto;
  margin-right: 135px;
  font-size: 13px;
}

.brand {
  margin-right: 30px;
  font-size: 15px;
  font-weight: 900;
  color: #0b9c94;
}

.controls {
  display: flex;
  gap: 13px;
  padding-right: 5px;
}

/* Ribbon tabs */
.tabs {
  display: flex;
  flex: none;
  height: 31px;
  margin: 0 4px;
  background: #dedede;
  font-size: 14px;
  line-height: 30px;
}

.tabs a {
  margin-right: 1px;
  padding: 0 11px;
  white-space: nowrap;
}

.tabs .file {
  width: 70px;
  background: #569fb5;
  color: #fff;
  font-size: 13px;
  text-align: center;
  line-height: 28px;
}

.tabs .active {
  background: #fff;
  border-top: 1px solid #bbb;
  color: #1e6e88;
}

.search {
  display: flex;
  align-items: center;
  width: 136px;
  height: 20px;
  margin: 5px 16px 0 auto;
  padding-right: 2px;
  background: #fff;
  border: 1px solid #aaa;
}

.search input {
  flex: 1;
  min-width: 0;
  padding: 0 2px;
  border: none;
  background: none;
  font: inherit;
  font-size: 12px;
  line-height: 16px;
  color: #333;
}

.tab-tools {
  display: flex;
  gap: 17px;
}

.tabs .tutorials {
  display: flex;
  align-items: center;
  gap: 4px;
  padding: 0 11px 0 16px;
  font-size: 12px;
  line-height: 26px;
}

/* Ribbon */
.ribbon {
  display: flex;
  flex: none;
  height: 130px;
  margin: 0 4px;
  padding: 6px 0 4px;
  border-bottom: 2px solid #e6e6e6;
}

.group {
  display: flex;
  flex-direction: column;
  padding: 0 2px;
  border-right: 1px solid #ddd;
}

.group.padded {
  padding: 0 4px 0 13px;
}

.group.inset {
  padding-left: 5px;
}

.group-body {
  display: flex;
  flex: 1;
}

.group-label {
  display: flex;
  justify-content: center;
  position: relative;
  height: 18px;
  padding-right: 16px;
  line-height: 16px;
  color: #2b6f86;
}

.padded .group-label {
  padding-right: 24px;
}

.launcher {
  position: absolute;
  right: 2px;
  top: 0;
  width: 16px;
  height: 16px;
}

.padded .launcher {
  right: 0;
}

.launcher.last {
  position: static;
  align-self: flex-end;
  margin-left: auto;
}

.big {
  flex-direction: column;
  justify-content: flex-start;
  width: 71px;
  line-height: 14px;
  text-align: center;
}

.big > svg {
  height: 64px;
  padding: 3px 0 8px;
}

.big.wide {
  width: 83px;
}

.small-grid {
  display: grid;
  grid-auto-rows: 35px;
  grid-template-columns: repeat(4, 40px);
}

.small-grid.one {
  grid-template-columns: 40px;
}

.small-grid.two {
  grid-template-columns: repeat(2, 40px);
}

.small-grid.three {
  grid-template-columns: repeat(3, 40px);
  padding-right: 5px;
}

.drop.top {
  height: 30px;
  margin-right: 3px;
}

.gallery {
  display: grid;
  grid-template-rows: repeat(3, 34px);
  width: 38px;
  margin-left: 8px;
  border: 1px dotted #bbb;
}

.gallery button {
  width: 36px;
}

.scroller {
  display: grid;
  grid-template-rows: repeat(3, 35px);
  width: 22px;
}

.pair {
  display: grid;
  grid-template-rows: 50px 54px;
  width: 56px;
  padding: 0 5px 0 13px;
}

.more {
  width: 76px;
}

.more > svg {
  width: 60px;
  height: 56px;
  margin: 4px 0;
  padding: 10px;
  border: 1px solid #ddd;
  border-radius: 4px;
}

/* Selection bar */
.selection-bar {
  display: flex;
  align-items: center;
  flex: none;
  height: 74px;
  margin: 0 4px;
  border-bottom: 2px solid #b5b5b5;
}

.menu {
  gap: 4px;
  height: 66px;
  padding: 0 5px 0 12px;
  margin-right: 15px;
  border-right: 1px solid #ddd;
}

.menu .caret {
  margin-left: 2px;
}

.combo {
  display: flex;
  align-items: center;
  position: relative;
  width: 146px;
  height: 20px;
  margin-right: 12px;
}

.combo + .combo {
  width: 154px;
  margin-right: 8px;
}

.combo select {
  width: 100%;
  height: 20px;
  padding: 0 3px;
  appearance: none;
  background: #fff;
  border: 1px solid #999;
  font: inherit;
  color: inherit;
}

.combo .caret {
  position: absolute;
  right: 5px;
  pointer-events: none;
}

.select-tools {
  display: flex;
}

.select-tools button {
  width: 48px;
  height: 45px;
}

.select-tools .drop {
  width: 14px;
}

.select-tools .on {
  width: 46px;
  margin-left: 2px;
}

.on {
  background: #cde5eb;
  border: 1px solid #b8dbe3;
}

.snap-grid {
  display: grid;
  grid-template-columns: repeat(4, 38px);
  grid-auto-rows: 35px;
  column-gap: 2px;
  padding: 0 8px 0 4px;
}

.view-grid {
  display: grid;
  grid-template-columns: 40px 40px 14px;
  grid-auto-rows: 35px;
  padding: 0 8px;
  border-left: 1px solid #ddd;
  border-right: 1px solid #ddd;
}

/* Workspace */
.workspace {
  display: flex;
  flex: 1;
  min-height: 0;
  margin: 0 4px;
}

.resource-bar {
  display: flex;
  flex-direction: column;
  width: 36px;
  background: #dedede;
  border-right: 1px solid #a8a8a8;
}

.resource-bar button {
  width: 100%;
  height: 47px;
  padding-left: 3px;
}

.resource-bar .gear {
  height: 28px;
  margin-bottom: 18px;
  padding: 0;
}

.resource-bar .active {
  width: 33px;
  margin-left: 3px;
  padding: 0;
  background: #fff;
  border: 1px solid #bbb;
  border-right: none;
}

.resource-web {
  padding-top: 4px;
}

.resource-web button {
  height: 59px;
}

/* Part Navigator */
.navigator {
  display: flex;
  flex-direction: column;
  width: 435px;
  padding: 0 12px 6px 7px;
}

.nav-title {
  display: flex;
  align-items: center;
  justify-content: space-between;
  flex: none;
  height: 33px;
  padding: 0 6px 0 3px;
}

.nav-title h1 {
  font-size: 12px;
  font-weight: normal;
}

.nav-box {
  flex: 1;
  min-height: 0;
  overflow: hidden;
  border: 1px solid #ddd;
  border-bottom: none;
}

.tree {
  width: 100%;
  border-collapse: collapse;
  table-layout: fixed;
  font-size: 13px;
}

.tree th {
  height: 21px;
  padding: 0 7px;
  background: #f0f0f0;
  border-right: 1px solid #ddd;
  border-bottom: 1px solid #ddd;
  font-weight: normal;
  line-height: 18px;
  text-align: left;
}

.col-name {
  width: 221px;
}

.col-date {
  width: 110px;
}

.tree td {
  height: 22px;
  border-right: 1px solid #ebebeb;
  border-bottom: 1px solid #ebebeb;
  line-height: 16px;
}

.tree td + td {
  padding-left: 7px;
}

.tree tr:nth-child(even) td {
  background: #fafafa;
}

.sort {
  display: inline-block;
  margin-left: 13px;
  border: 5px solid transparent;
  border-top: none;
  border-bottom: 6px solid #222;
  vertical-align: middle;
}

.node {
  display: flex;
  align-items: center;
  height: 21px;
  white-space: nowrap;
}

.node > svg {
  margin-right: 2px;
}

.node > i {
  flex: none;
  align-self: stretch;
  width: 21px;
}

.node .line,
.node .tee {
  background: linear-gradient(#ccc, #ccc) 10px 0 / 1px 100% no-repeat;
}

.node .tee {
  background: linear-gradient(#ccc, #ccc) 10px 0 / 1px 100% no-repeat, linear-gradient(#ccc, #ccc) 10px 50% / 11px 1px no-repeat;
}

.node .elbow {
  background: linear-gradient(#ccc, #ccc) 10px 0 / 1px 50% no-repeat, linear-gradient(#ccc, #ccc) 10px 50% / 11px 1px no-repeat;
}

.node .box {
  align-self: center;
  height: 9px;
  background: linear-gradient(#222, #222) 8px 50% / 5px 1px no-repeat, linear-gradient(#ccc, #ccc) 16px 50% / 5px 1px no-repeat;
}

.node .box::before {
  content: "";
  display: block;
  width: 9px;
  height: 9px;
  margin-left: 6px;
  border: 1px solid #ccc;
}

.node input {
  appearance: none;
  width: 14px;
  height: 14px;
  margin: 0 3px 0 1px;
  border: 1px solid #222;
  background: #fff;
}

.node input:checked::before {
  content: "";
  display: block;
  height: 12px;
  background: #2bb844;
  clip-path: polygon(5% 50%, 30% 40%, 45% 62%, 85% 5%, 100% 12%, 52% 95%, 35% 95%);
}

.current {
  font-weight: bold;
}

.scrollbar {
  display: flex;
  flex: none;
  height: 20px;
  padding: 1px 0;
  background: #f3f3f3;
}

.scrollbar button {
  width: 20px;
}

.track {
  flex: 1;
}

.thumb {
  width: 93%;
  height: 17px;
  background: #cacaca;
}

.splitter {
  flex: none;
  height: 6px;
  background: #d6d6d6;
  border-top: 2px solid #aaa;
  border-bottom: 1px solid #aaa;
}

.section {
  flex: none;
  justify-content: space-between;
  height: 27px;
  padding: 0 6px 0 7px;
  border-bottom: 2px solid #d0d0d0;
  font-size: 14px;
  color: #2b6f86;
}

/* Drawing sheet */
.sheet {
  display: flex;
  flex-direction: column;
  flex: 1;
  min-width: 0;
  border-left: 2px solid #a8a8a8;
}

.doc-tabs {
  display: flex;
  flex: none;
  height: 25px;
  border-bottom: 3px solid #569fb5;
  font-size: 13px;
}

.doc-tabs a {
  display: flex;
  align-items: center;
  gap: 5px;
  padding: 0 23px 0 5px;
}

.doc-tabs .active {
  padding: 0 6px;
  background: #569fb5;
  color: #fff;
}

.canvas {
  position: relative;
  flex: 1;
  min-height: 0;
  overflow: hidden;
  border: solid #999;
  border-width: 0 2px 2px 1px;
}

.drawing {
  font-family: "Liberation Sans", Arial, sans-serif;
  fill: #000;
}

.sheet-name {
  position: absolute;
  left: 4px;
  bottom: 2px;
  font-family: "Liberation Sans", Arial, sans-serif;
  font-size: 15px;
}

.watermark {
  position: absolute;
  right: 19px;
  bottom: 2px;
  display: flex;
  flex-direction: column;
  align-items: flex-end;
  font-size: 30px;
  font-weight: bold;
  line-height: 40px;
  color: #fff;
  text-shadow: 4px 0 #000, -4px 0 #000, 0 4px #000, 0 -4px #000, 3px 3px #000, -3px 3px #000, 3px -3px #000, -3px -3px #000, 2px 0 #000, -2px 0 #000, 0 2px #000, 0 -2px #000;
}

.watermark [lang="ko"] {
  padding-right: 2px;
  font-family: "Noto Sans CJK KR", sans-serif;
  font-size: 34px;
}

/* Status bar */
.status {
  display: flex;
  align-items: center;
  flex: none;
  gap: 7px;
  height: 33px;
  padding: 0 67px 0 8px;
  border-bottom: 9px solid #569fb5;
  font-weight: 600;
}

.status span {
  margin-right: auto;
  padding-bottom: 3px;
}
```
